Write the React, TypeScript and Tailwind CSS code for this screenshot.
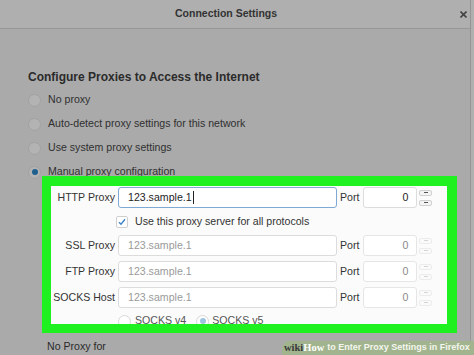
import React from 'react';

const Radio = ({ checked = false, faint = false }: { checked?: boolean; faint?: boolean }) => (
  <span
    className={`flex items-center justify-center w-[13px] h-[13px] rounded-full border ${
      faint ? 'border-[#d8d8d8] bg-white' : 'border-[#a2a2a2] bg-[#b3b3b3]'
    }`}
  >
    {checked && (
      <span className={`w-[6px] h-[6px] rounded-full ${faint ? 'bg-[#9cc3e0]' : 'bg-[#1f5f8e]'}`} />
    )}
  </span>
);

const Spinner = ({ active = false }: { active?: boolean }) => (
  <div className="flex flex-col gap-[4px] ml-[2px]">
    {[0, 1].map((i) => (
      <div
        key={i}
        className={`w-[13px] h-[6px] rounded-[2px] border flex items-center justify-center ${
          active ? 'border-[#d0d0d0] bg-[#f4f4f4]' : 'border-[#ececec] bg-[#fafafa]'
        }`}
      >
        <span className={`w-[4px] h-px ${active ? 'bg-[#555]' : 'bg-[#d4d4d4]'}`} />
      </div>
    ))}
  </div>
);

const ProxyRow = ({
  label,
  value,
  active = false,
}: {
  label: string;
  value: string;
  active?: boolean;
}) => (
  <div className="flex items-center h-[21px]">
    <span className="w-[64px] text-right text-[#333] whitespace-nowrap">{label}</span>
    <div
      className={`ml-[3px] w-[219px] h-full flex items-center pl-[9px] bg-white rounded-[3px] border ${
        active ? 'border-[#7ea9d4] text-[#1e1e1e]' : 'border-[#dcdcdc] text-[#9a9a9a]'
      }`}
    >
      {value}
      {active && <span className="w-px h-[13px] bg-[#222] ml-[1px]" />}
    </div>
    <span className="ml-[3px] text-[#333]">Port</span>
    <div
      className={`ml-[4px] w-[54px] h-full flex items-center justify-end pr-[8px] bg-white rounded-[3px] border ${
        active ? 'border-[#dcdcdc] text-[#1e1e1e]' : 'border-[#e6e6e6] text-[#8a8a8a]'
      }`}
    >
      0
    </div>
    <Spinner active={active} />
  </div>
);

export default function App() {
  const options = [
    { label: 'No proxy', checked: false },
    { label: 'Auto-detect proxy settings for this network', checked: false },
    { label: 'Use system proxy settings', checked: false },
    { label: 'Manual proxy configuration', checked: true },
  ];

  return (
    <div className="relative w-[474px] h-[355px] overflow-hidden bg-[#aaaaaa] text-[10.6px] font-['Liberation_Sans',Arial,sans-serif] text-[#2e2e2e]">
      <div className="flex h-full">
        <div className="flex-1 flex flex-col">
          {/* Title bar */}
          <div className="h-[29px] flex items-center bg-[#afafaf] border-b border-[#979797]">
            <span className="ml-[175px] text-[10.5px] font-bold text-[#333]">Connection Settings</span>
            <svg className="ml-auto mr-[3px] w-[7px] h-[7px]" viewBox="0 0 7 7">
              <path d="M0.5 0.5L6.5 6.5M6.5 0.5L0.5 6.5" stroke="#444" strokeWidth={1.6} />
            </svg>
          </div>

          <div className="pl-[28px]">
            <h1 className="mt-[41px] text-[12px] leading-[14px] font-bold text-[#2b2b2b]">
              Configure Proxies to Access the Internet
            </h1>
            <div className="mt-[4px] flex flex-col">
              {options.map((o) => (
                <div key={o.label} className="h-[24px] flex items-center gap-[7px]">
                  <Radio checked={o.checked} />
                  <span className="text-[#303030]">{o.label}</span>
                </div>
              ))}
            </div>

            {/* Highlighted manual settings */}
            <div className="relative -mt-[8px] ml-[14px] w-[415px] h-[157px] border-t-[10px] border-r-[10px] border-b-[9px] border-l-[9px] border-[#1ff01f]">
              <div className="h-full bg-[#fbfbfb] overflow-hidden pt-[1px]">
                <ProxyRow label="HTTP Proxy" value="123.sample.1" active />
                <div className="mt-[5px] h-[18px] flex items-center pl-[65px]">
                  <span className="w-[12px] h-[12px] rounded-[2px] border border-[#cfcfcf] bg-white flex items-center justify-center">
                    <svg className="w-[8px] h-[8px]" viewBox="0 0 8 8">
                      <path d="M1 4.2L3 6.2L7 1.2" fill="none" stroke="#3d82c6" strokeWidth={1.4} />
                    </svg>
                  </span>
                  <span className="ml-[7px] text-[#333]">Use this proxy server for all protocols</span>
                </div>
                <div className="mt-[4px] flex flex-col gap-[5px]">
                  <ProxyRow label="SSL Proxy" value="123.sample.1" />
                  <ProxyRow label="FTP Proxy" value="123.sample.1" />
                  <ProxyRow label="SOCKS Host" value="123.sample.1" />
                </div>
                <div className="mt-[5px] h-[16px] flex items-center pl-[67px] text-[#555]">
                  <Radio faint />
                  <span className="ml-[4px]">SOCKS v4</span>
                  <span className="ml-[10px]">
                    <Radio checked faint />
                  </span>
                  <span className="ml-[3px]">SOCKS v5</span>
                </div>
              </div>
            </div>

            <div className="mt-[6px] ml-[19px] leading-[14px] text-[#2a2a2a]">No Proxy for</div>
          </div>
        </div>
        <div className="w-[4px] border-l border-[#959595] bg-[#b0b0b0]" />
      </div>

      {/* watermark */}
      <div className="absolute right-0 bottom-0 w-[192px] h-[14px] rounded-tl-[7px] rounded-bl-[2px] bg-[#a1b48d] flex items-center pl-[2px] whitespace-nowrap">
        <span className="font-['Liberation_Serif',serif] font-bold text-[10.5px] text-[#3a3a3a]">wiki</span>
        <span className="font-['Liberation_Serif',serif] font-bold text-[10.5px] text-white">How</span>
        <span className="ml-[3px] font-bold text-[9px] text-[#f4f6ef]">to Enter Proxy Settings in Firefox</span>
      </div>
    </div>
  );
}
